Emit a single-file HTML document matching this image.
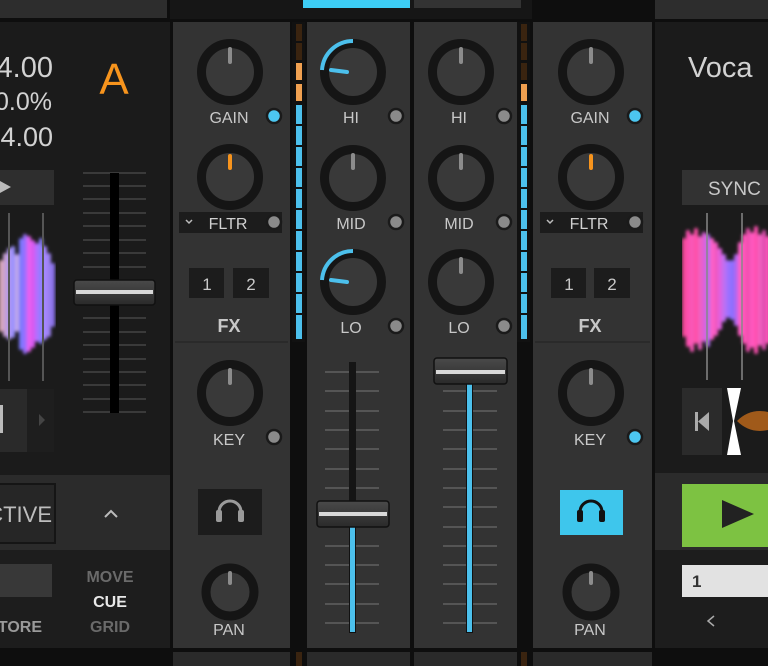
<!DOCTYPE html>
<html><head><meta charset="utf-8"><style>
html,body{margin:0;padding:0;background:#0e0e0e;width:768px;height:666px;overflow:hidden}
svg{display:block}
text{font-family:"Liberation Sans",sans-serif}
</style></head><body>
<svg width="768" height="666" viewBox="0 0 768 666" xmlns="http://www.w3.org/2000/svg">
<defs>
<linearGradient id="hd" x1="0" y1="0" x2="0" y2="1"><stop offset="0" stop-color="#4a4a4a"/><stop offset="1" stop-color="#2a2a2a"/></linearGradient>
<filter id="bl" x="-20%" y="-20%" width="140%" height="140%"><feGaussianBlur stdDeviation="1.6"/></filter>
<clipPath id="lc"><rect x="0" y="210" width="56" height="175"/></clipPath>
<clipPath id="rc"><rect x="682" y="210" width="86" height="175"/></clipPath>
</defs>
<rect width="768" height="666" fill="#0e0e0e"/>
<!-- top strip -->
<rect x="0" y="0" width="167" height="18" fill="#2d2d2d"/>
<rect x="170" y="0" width="362" height="19" fill="#161616"/>
<rect x="303" y="0" width="107" height="8" fill="#3dcdf5"/>
<rect x="414" y="0" width="107" height="8" fill="#333"/>
<rect x="655" y="0" width="113" height="19" fill="#2d2d2d"/>

<!-- left deck -->
<rect x="0" y="22" width="170" height="453" fill="#1b1b1b"/>
<rect x="0" y="475" width="170" height="75" fill="#2b2b2b"/>
<rect x="0" y="550" width="170" height="98" fill="#1d1d1d"/>
<text x="53" y="77" fill="#d2d2d2" font-size="29" text-anchor="end">4.00</text>
<text x="52" y="110" fill="#d2d2d2" font-size="25" text-anchor="end">0.0%</text>
<text x="53" y="146" fill="#d2d2d2" font-size="27" text-anchor="end">4.00</text>
<text x="114" y="94" fill="#f7941d" font-size="44" text-anchor="middle">A</text>
<rect x="0" y="170" width="54" height="35" fill="#2e2e2e"/>
<polygon points="0,181 11,187 0,193" fill="#bbb"/>
<!-- waveform left -->
<g clip-path="url(#lc)"><g filter="url(#bl)" stroke-linecap="round">
<line x1="1" y1="262" x2="1" y2="330" stroke="#d8a8b8" stroke-width="4"/>
<line x1="5" y1="255" x2="5" y2="335" stroke="#c8a0d0" stroke-width="4"/>
<line x1="9" y1="250" x2="9" y2="338" stroke="#b098f0" stroke-width="4"/>
<line x1="13" y1="248" x2="13" y2="336" stroke="#9a90ff" stroke-width="4"/>
<line x1="17" y1="256" x2="17" y2="330" stroke="#c0a8e8" stroke-width="4"/>
<line x1="21" y1="240" x2="21" y2="348" stroke="#7a78ff" stroke-width="4"/>
<line x1="25" y1="236" x2="25" y2="352" stroke="#9a70ff" stroke-width="4"/>
<line x1="29" y1="238" x2="29" y2="350" stroke="#e860f0" stroke-width="4"/>
<line x1="33" y1="242" x2="33" y2="346" stroke="#d858f0" stroke-width="4"/>
<line x1="37" y1="245" x2="37" y2="340" stroke="#b070ff" stroke-width="4"/>
<line x1="41" y1="240" x2="41" y2="342" stroke="#8a80ff" stroke-width="4"/>
<line x1="45" y1="248" x2="45" y2="338" stroke="#a888ff" stroke-width="4"/>
<line x1="49" y1="255" x2="49" y2="335" stroke="#9a80f0" stroke-width="4"/>
<line x1="53" y1="265" x2="53" y2="325" stroke="#8870e8" stroke-width="4"/>
</g></g>
<line x1="9" y1="213" x2="9" y2="381" stroke="#555" stroke-width="2"/>
<line x1="43" y1="213" x2="43" y2="381" stroke="#555" stroke-width="2"/>
<rect x="0" y="389" width="27" height="63" fill="#2a2a2a"/>
<rect x="27" y="389" width="27" height="63" fill="#1e1e1e"/>
<rect x="0" y="405" width="3" height="28" fill="#bbb"/>
<polygon points="39,414 45,420 39,426" fill="#444"/>
<!-- pitch fader -->
<g stroke="#3a3a3a" stroke-width="2">
<line x1="83" y1="173" x2="146" y2="173"/><line x1="83" y1="186" x2="146" y2="186"/><line x1="83" y1="199" x2="146" y2="199"/><line x1="83" y1="213" x2="146" y2="213"/><line x1="83" y1="226" x2="146" y2="226"/><line x1="83" y1="240" x2="146" y2="240"/><line x1="83" y1="253" x2="146" y2="253"/><line x1="83" y1="267" x2="146" y2="267"/><line x1="83" y1="318" x2="146" y2="318"/><line x1="83" y1="332" x2="146" y2="332"/><line x1="83" y1="345" x2="146" y2="345"/><line x1="83" y1="359" x2="146" y2="359"/><line x1="83" y1="372" x2="146" y2="372"/><line x1="83" y1="385" x2="146" y2="385"/><line x1="83" y1="399" x2="146" y2="399"/><line x1="83" y1="412" x2="146" y2="412"/>
</g>
<rect x="110" y="173" width="9" height="240" fill="#000"/>
<rect x="74" y="280" width="81" height="25" rx="3" fill="url(#hd)" stroke="#111" stroke-width="1.5"/>
<rect x="76" y="290" width="77" height="4" fill="#d8d8d8"/>
<!-- bottom left -->
<rect x="-2" y="484" width="57" height="59" fill="#262626" stroke="#151515" stroke-width="2"/>
<text x="52" y="522" fill="#bdbdbd" font-size="22" text-anchor="end">CTIVE</text>
<polyline points="105,517 111,511 117,517" fill="none" stroke="#bbb" stroke-width="2"/>
<rect x="0" y="564" width="52" height="33" fill="#383838"/>
<text x="42" y="632" fill="#9a9a9a" font-size="16" text-anchor="end" font-weight="bold">TORE</text>
<text x="110" y="582" fill="#6a6a6a" font-size="16" text-anchor="middle" font-weight="bold">MOVE</text>
<text x="110" y="607" fill="#e8e8e8" font-size="16" text-anchor="middle" font-weight="bold">CUE</text>
<text x="110" y="632" fill="#6a6a6a" font-size="16" text-anchor="middle" font-weight="bold">GRID</text>

<!-- channel strips -->
<rect x="173" y="22" width="117" height="626" fill="#333"/>
<rect x="533" y="22" width="119" height="626" fill="#333"/>
<line x1="175" y1="342" x2="288" y2="342" stroke="#2a2a2a" stroke-width="2"/>
<line x1="535" y1="342" x2="650" y2="342" stroke="#2a2a2a" stroke-width="2"/>
<rect x="307" y="22" width="103" height="626" fill="#333"/>
<rect x="414" y="22" width="103" height="626" fill="#333"/>

<!-- meters -->
<rect x="292" y="22" width="13" height="320" fill="#111"/>
<rect x="517" y="22" width="13" height="320" fill="#111"/>
<g>
<rect x="296" y="24" width="6" height="17" fill="#3a2410"/><rect x="296" y="43" width="6" height="17" fill="#3a2410"/>
<rect x="296" y="63" width="6" height="17" fill="#f0a050"/><rect x="296" y="84" width="6" height="17" fill="#f0a050"/>
<rect x="521" y="24" width="6" height="17" fill="#3a2410"/><rect x="521" y="43" width="6" height="17" fill="#3a2410"/><rect x="521" y="63" width="6" height="17" fill="#3a2410"/>
<rect x="521" y="84" width="6" height="17" fill="#f0a050"/>
</g>
<g fill="#4cc0ec">
<rect x="296" y="105" width="6" height="19"/><rect x="296" y="126" width="6" height="19"/><rect x="296" y="147" width="6" height="19"/><rect x="296" y="168" width="6" height="19"/><rect x="296" y="189" width="6" height="19"/><rect x="296" y="210" width="6" height="19"/><rect x="296" y="231" width="6" height="19"/><rect x="296" y="252" width="6" height="19"/><rect x="296" y="273" width="6" height="19"/><rect x="296" y="294" width="6" height="19"/><rect x="296" y="315" width="6" height="24"/>
<rect x="521" y="105" width="6" height="19"/><rect x="521" y="126" width="6" height="19"/><rect x="521" y="147" width="6" height="19"/><rect x="521" y="168" width="6" height="19"/><rect x="521" y="189" width="6" height="19"/><rect x="521" y="210" width="6" height="19"/><rect x="521" y="231" width="6" height="19"/><rect x="521" y="252" width="6" height="19"/><rect x="521" y="273" width="6" height="19"/><rect x="521" y="294" width="6" height="19"/><rect x="521" y="315" width="6" height="24"/>
</g>

<!-- knobs -->
<g stroke="#151515" stroke-width="9" fill="#393939">
<circle cx="230" cy="72" r="28.5"/><circle cx="230" cy="177" r="28.5"/><circle cx="230" cy="393" r="28.5"/><circle cx="230" cy="592" r="24"/>
<circle cx="591" cy="72" r="28.5"/><circle cx="591" cy="177" r="28.5"/><circle cx="591" cy="393" r="28.5"/><circle cx="591" cy="592" r="24"/>
<circle cx="353" cy="72" r="28.5"/><circle cx="353" cy="178" r="28.5"/><circle cx="353" cy="282" r="28.5"/>
<circle cx="461" cy="72" r="28.5"/><circle cx="461" cy="178" r="28.5"/><circle cx="461" cy="282" r="28.5"/>
</g>
<g stroke="#8c8c8c" stroke-width="4" stroke-linecap="round">
<line x1="230" y1="49" x2="230" y2="62"/><line x1="230" y1="370" x2="230" y2="383"/><line x1="230" y1="573" x2="230" y2="583"/>
<line x1="591" y1="49" x2="591" y2="62"/><line x1="591" y1="370" x2="591" y2="383"/><line x1="591" y1="573" x2="591" y2="583"/>
<line x1="353" y1="155" x2="353" y2="168"/>
<line x1="461" y1="49" x2="461" y2="62"/><line x1="461" y1="155" x2="461" y2="168"/><line x1="461" y1="259" x2="461" y2="272"/>
</g>
<g stroke="#f7941d" stroke-width="4" stroke-linecap="round">
<line x1="230" y1="156" x2="230" y2="168"/><line x1="591" y1="156" x2="591" y2="168"/>
</g>
<g stroke="#4cc0ec" stroke-width="4" fill="none" stroke-linecap="butt">
<path d="M353,41 A31,31 0 0 0 322,70"/>
<path d="M353,251 A31,31 0 0 0 322,280"/>
<line x1="331" y1="70" x2="347" y2="72" stroke-linecap="round"/>
<line x1="331" y1="280" x2="347" y2="282" stroke-linecap="round"/>
</g>

<!-- labels -->
<g fill="#c8c8c8" font-size="16" text-anchor="middle">
<text x="229" y="123">GAIN</text><text x="590" y="123">GAIN</text>
<text x="229" y="445">KEY</text><text x="590" y="445">KEY</text>
<text x="229" y="635">PAN</text><text x="590" y="635">PAN</text>
<text x="351" y="123">HI</text><text x="459" y="123">HI</text>
<text x="351" y="229">MID</text><text x="459" y="229">MID</text>
<text x="351" y="333">LO</text><text x="459" y="333">LO</text>
<text x="229" y="332" font-size="18" font-weight="bold">FX</text><text x="590" y="332" font-size="18" font-weight="bold">FX</text>
</g>
<!-- FLTR bars -->
<rect x="179" y="212" width="103" height="21" fill="#1c1c1c"/>
<rect x="540" y="212" width="103" height="21" fill="#1c1c1c"/>
<g fill="none" stroke="#bbb" stroke-width="1.5"><polyline points="186,220 189,223 192,220"/><polyline points="547,220 550,223 553,220"/></g>
<text x="228" y="229" fill="#d0d0d0" font-size="16" text-anchor="middle">FLTR</text>
<text x="589" y="229" fill="#d0d0d0" font-size="16" text-anchor="middle">FLTR</text>
<!-- dots -->
<g stroke="#1a1a1a" stroke-width="2.5">
<circle cx="274" cy="116" r="7" fill="#4cc6f0"/><circle cx="635" cy="116" r="7" fill="#4cc6f0"/>
<circle cx="274" cy="222" r="7" fill="#8a8a8a"/><circle cx="635" cy="222" r="7" fill="#8a8a8a"/>
<circle cx="274" cy="437" r="7" fill="#8a8a8a"/><circle cx="635" cy="437" r="7" fill="#4cc6f0"/>
<circle cx="396" cy="116" r="7" fill="#8a8a8a"/><circle cx="396" cy="222" r="7" fill="#8a8a8a"/><circle cx="396" cy="326" r="7" fill="#8a8a8a"/>
<circle cx="504" cy="116" r="7" fill="#8a8a8a"/><circle cx="504" cy="222" r="7" fill="#8a8a8a"/><circle cx="504" cy="326" r="7" fill="#8a8a8a"/>
</g>
<!-- FX 1 2 -->
<g fill="#1c1c1c"><rect x="189" y="268" width="35" height="30"/><rect x="233" y="268" width="36" height="30"/><rect x="551" y="268" width="35" height="30"/><rect x="594" y="268" width="36" height="30"/></g>
<g fill="#c8c8c8" font-size="17" text-anchor="middle"><text x="207" y="290">1</text><text x="251" y="290">2</text><text x="569" y="290">1</text><text x="612" y="290">2</text></g>
<!-- headphones -->
<rect x="198" y="489" width="64" height="46" fill="#1c1c1c"/>
<rect x="560" y="490" width="63" height="45" fill="#3ec6ec"/>
<g fill="none" stroke-width="3">
<path d="M219,520 V512 A11,11 0 0 1 241,512 V520" stroke="#9a9a9a"/>
<path d="M580,520 V512 A11,11 0 0 1 602,512 V520" stroke="#111"/>
</g>
<g><rect x="216" y="510" width="6" height="12" rx="2" fill="#9a9a9a"/><rect x="238" y="510" width="6" height="12" rx="2" fill="#9a9a9a"/>
<rect x="577" y="510" width="6" height="12" rx="2" fill="#111"/><rect x="599" y="510" width="6" height="12" rx="2" fill="#111"/></g>

<!-- channel faders -->
<g stroke="#555" stroke-width="2">
<line x1="325" y1="372" x2="379" y2="372"/><line x1="325" y1="391" x2="379" y2="391"/><line x1="325" y1="411" x2="379" y2="411"/><line x1="325" y1="430" x2="379" y2="430"/><line x1="325" y1="449" x2="379" y2="449"/><line x1="325" y1="469" x2="379" y2="469"/><line x1="325" y1="488" x2="379" y2="488"/><line x1="325" y1="546" x2="379" y2="546"/><line x1="325" y1="565" x2="379" y2="565"/><line x1="325" y1="584" x2="379" y2="584"/><line x1="325" y1="604" x2="379" y2="604"/><line x1="325" y1="623" x2="379" y2="623"/>
<line x1="443" y1="391" x2="497" y2="391"/><line x1="443" y1="411" x2="497" y2="411"/><line x1="443" y1="430" x2="497" y2="430"/><line x1="443" y1="449" x2="497" y2="449"/><line x1="443" y1="469" x2="497" y2="469"/><line x1="443" y1="488" x2="497" y2="488"/><line x1="443" y1="507" x2="497" y2="507"/><line x1="443" y1="527" x2="497" y2="527"/><line x1="443" y1="546" x2="497" y2="546"/><line x1="443" y1="565" x2="497" y2="565"/><line x1="443" y1="584" x2="497" y2="584"/><line x1="443" y1="604" x2="497" y2="604"/><line x1="443" y1="623" x2="497" y2="623"/>
</g>
<rect x="349" y="362" width="7" height="140" fill="#151515"/>
<rect x="349" y="527" width="7" height="106" fill="#111"/><rect x="350" y="527" width="5" height="105" fill="#4cc0ec"/>
<rect x="466" y="384" width="7" height="249" fill="#111"/><rect x="467" y="384" width="5" height="248" fill="#4cc0ec"/>
<rect x="317" y="501" width="72" height="26" rx="3" fill="url(#hd)" stroke="#111" stroke-width="1.5"/>
<rect x="319" y="512" width="68" height="4" fill="#d8d8d8"/>
<rect x="434" y="358" width="73" height="26" rx="3" fill="url(#hd)" stroke="#111" stroke-width="1.5"/>
<rect x="436" y="370" width="69" height="4" fill="#d8d8d8"/>

<!-- right deck -->
<rect x="655" y="22" width="113" height="451" fill="#1b1b1b"/>
<rect x="655" y="473" width="113" height="77" fill="#2b2b2b"/>
<rect x="655" y="550" width="113" height="98" fill="#1d1d1d"/>
<text x="688" y="77" fill="#d2d2d2" font-size="29">Voca</text>
<rect x="682" y="170" width="86" height="35" fill="#323232"/>
<text x="708" y="195" fill="#c8c8c8" font-size="19">SYNC</text>
<g clip-path="url(#rc)"><g filter="url(#bl)" stroke-linecap="round" stroke-width="4">
<line x1="684" y1="240" x2="684" y2="335" stroke="#f04898"/>
<line x1="688" y1="232" x2="688" y2="345" stroke="#ff50b0"/>
<line x1="692" y1="236" x2="692" y2="350" stroke="#f858b8"/>
<line x1="696" y1="230" x2="696" y2="342" stroke="#ff4fa8"/>
<line x1="700" y1="238" x2="700" y2="348" stroke="#f060c0"/>
<line x1="704" y1="234" x2="704" y2="340" stroke="#e060d8"/>
<line x1="708" y1="236" x2="708" y2="345" stroke="#b070f0"/>
<line x1="712" y1="240" x2="712" y2="338" stroke="#ff60c8"/>
<line x1="716" y1="244" x2="716" y2="334" stroke="#f058c0"/>
<line x1="720" y1="250" x2="720" y2="328" stroke="#e060e0"/>
<line x1="724" y1="256" x2="724" y2="320" stroke="#c070f0"/>
<line x1="728" y1="262" x2="728" y2="316" stroke="#a070ff"/>
<line x1="732" y1="262" x2="732" y2="318" stroke="#8a70ff"/>
<line x1="736" y1="256" x2="736" y2="324" stroke="#b068f0"/>
<line x1="740" y1="244" x2="740" y2="334" stroke="#ff60c8"/>
<line x1="744" y1="236" x2="744" y2="342" stroke="#ff55b8"/>
<line x1="748" y1="230" x2="748" y2="350" stroke="#f050b0"/>
<line x1="752" y1="234" x2="752" y2="346" stroke="#ff58c0"/>
<line x1="756" y1="228" x2="756" y2="352" stroke="#ff50b0"/>
<line x1="760" y1="236" x2="760" y2="344" stroke="#f060c0"/>
<line x1="764" y1="232" x2="764" y2="348" stroke="#e050b0"/>
<line x1="768" y1="238" x2="768" y2="342" stroke="#ff55b8"/>
</g></g>
<line x1="707" y1="213" x2="707" y2="380" stroke="#888" stroke-width="1.5"/>
<line x1="742" y1="213" x2="742" y2="380" stroke="#888" stroke-width="1.5"/>
<rect x="682" y="388" width="40" height="67" fill="#2b2b2b"/>
<rect x="695" y="412" width="3" height="19" fill="#aaa"/><polygon points="709,412 698,421.5 709,431" fill="#aaa"/>
<polygon points="727,388 741,388 734,421 741,455 727,455 733,421" fill="#fff"/>
<path d="M737,421 Q750,408 768,412 L768,430 Q750,434 737,421 Z" fill="#a05a1a"/>
<rect x="682" y="484" width="86" height="63" fill="#7dc242"/>
<polygon points="722,500 754,514 722,528" fill="#222"/>
<rect x="682" y="565" width="86" height="32" fill="#e2e2e2"/>
<text x="692" y="587" fill="#333" font-size="17" font-weight="bold">1</text>
<polyline points="714,616 708,621 714,626" fill="none" stroke="#aaa" stroke-width="1.5"/>

<!-- bottom strip -->
<rect x="173" y="652" width="117" height="14" fill="#2a2a2a"/>
<rect x="307" y="652" width="103" height="14" fill="#2a2a2a"/>
<rect x="414" y="652" width="103" height="14" fill="#2a2a2a"/>
<rect x="533" y="652" width="119" height="14" fill="#2a2a2a"/>
<rect x="296" y="652" width="6" height="14" fill="#3a2410"/>
<rect x="521" y="652" width="6" height="14" fill="#3a2410"/>
</svg>
</body></html>
